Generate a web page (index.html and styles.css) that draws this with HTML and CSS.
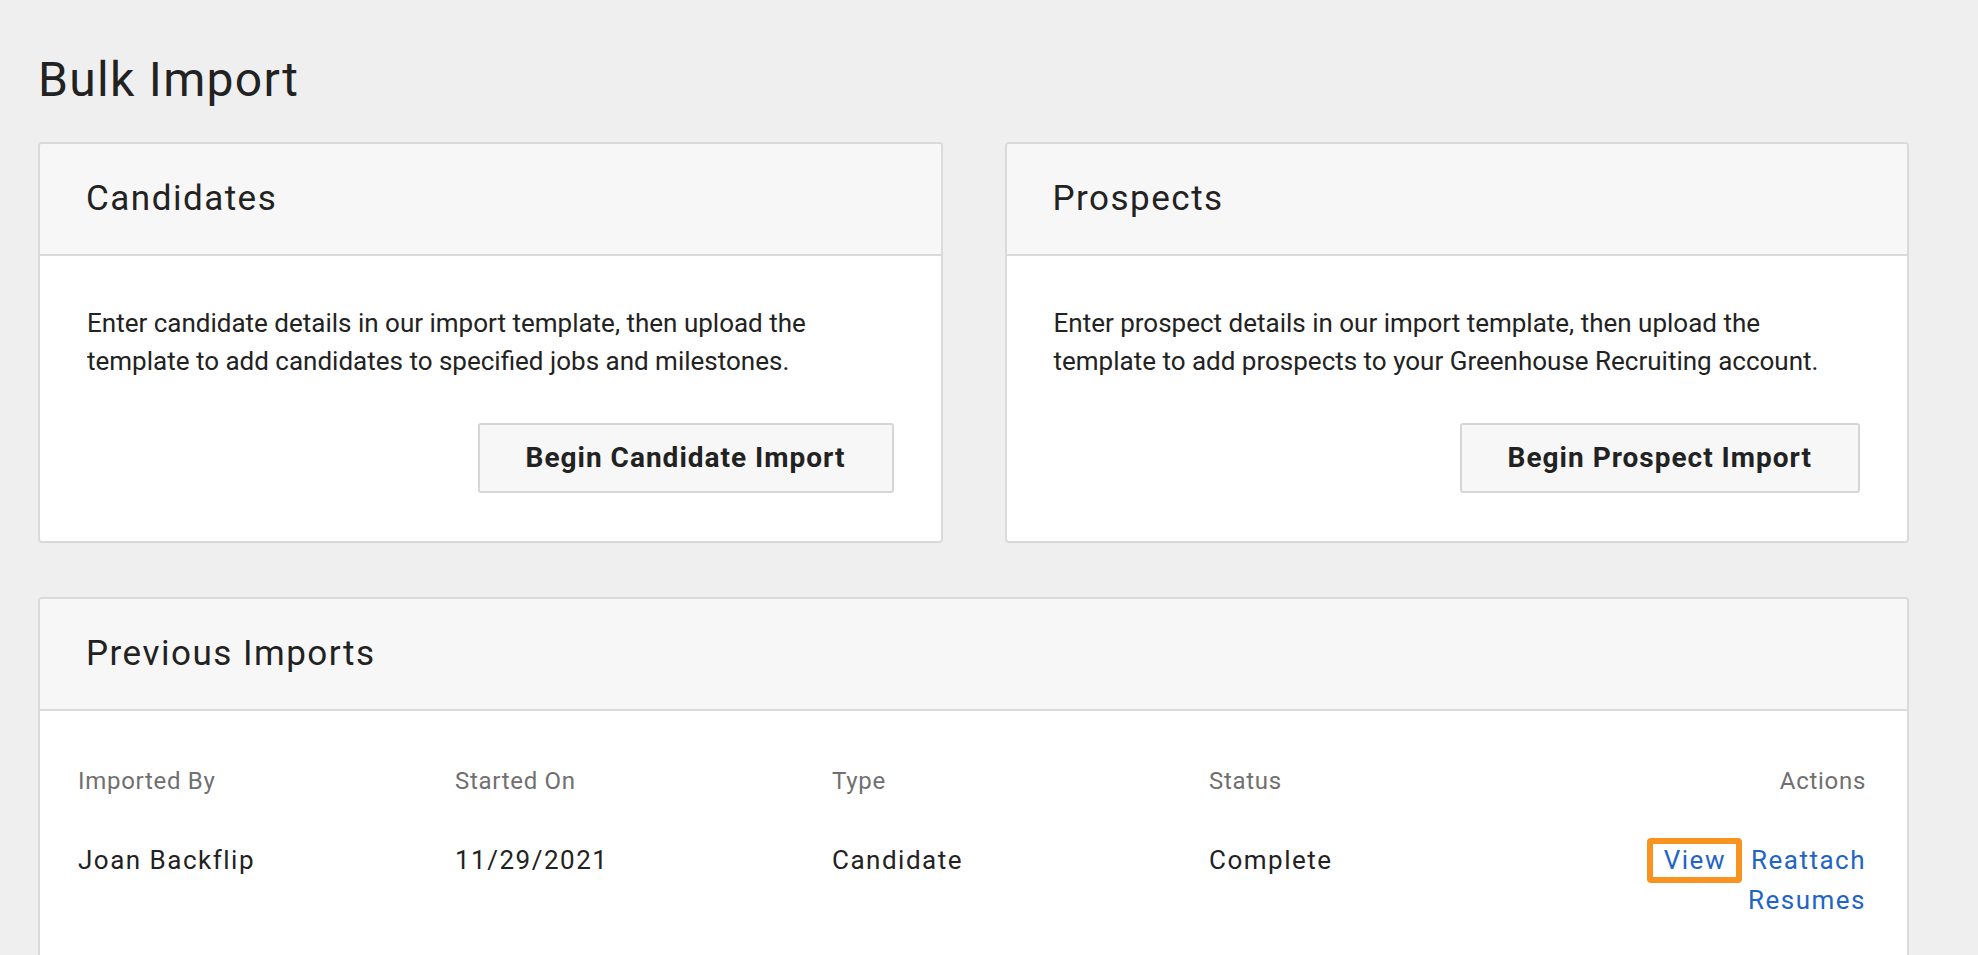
FILE: index.html
```html
<!DOCTYPE html>
<html lang="en">
<head>
<meta charset="utf-8">
<title>Bulk Import</title>
<link rel="stylesheet" href="styles.css">
</head>
<body>
<main class="page">
  <h1 class="page-title">Bulk Import</h1>
  <div class="import-grid">
    <section class="card">
      <header class="card-header"><h2 class="card-title">Candidates</h2></header>
      <div class="card-body">
        <p class="card-text">Enter candidate details in our import template, then upload the template to add candidates to specified jobs and milestones.</p>
        <div class="card-actions"><button class="btn">Begin Candidate Import</button></div>
      </div>
    </section>
    <section class="card">
      <header class="card-header"><h2 class="card-title">Prospects</h2></header>
      <div class="card-body">
        <p class="card-text">Enter prospect details in our import template, then upload the template to add prospects to your Greenhouse Recruiting account.</p>
        <div class="card-actions"><button class="btn">Begin Prospect Import</button></div>
      </div>
    </section>
  </div>
  <section class="card card-wide">
    <header class="card-header"><h2 class="card-title">Previous Imports</h2></header>
    <div class="card-body table-body">
      <div class="table">
        <div class="th">Imported By</div>
        <div class="th">Started On</div>
        <div class="th">Type</div>
        <div class="th">Status</div>
        <div class="th th-right">Actions</div>
        <div class="td">Joan Backflip</div>
        <div class="td">11/29/2021</div>
        <div class="td">Candidate</div>
        <div class="td">Complete</div>
        <div class="td td-actions">
          <a class="link link-highlight" href="#">View</a>
          <a class="link link-wrap" href="#">Reattach Resumes</a>
        </div>
      </div>
    </div>
  </section>
</main>
</body>
</html>
```
FILE: styles.css
```css
* { box-sizing: border-box; }
html, body { margin: 0; padding: 0; }
body {
  background: #efefef;
  color: #222222;
  font-family: Roboto, "Liberation Sans", Arial, sans-serif;
  height: 955px;
  overflow: hidden;
}
.page {
  width: 1909px;
  padding-left: 38px;
}
.page-title {
  margin: 0;
  padding-top: 51px;
  font-size: 48px;
  font-weight: 400;
  line-height: 57.6px;
  letter-spacing: 1.3px;
  margin-bottom: 33px;
}
.import-grid {
  display: grid;
  grid-template-columns: 1fr 1fr;
  column-gap: 62px;
}
.card {
  background: #ffffff;
  border: 2px solid #dadada;
  border-radius: 4px;
  overflow: hidden;
}
.card-header {
  background: #f7f7f7;
  border-bottom: 2px solid #dadada;
  height: 112px;
  padding: 0 46px;
  display: flex;
  align-items: center;
}
.card-title {
  margin: 0;
  font-size: 35px;
  font-weight: 400;
  line-height: 42px;
  letter-spacing: 1.5px;
}
.card-body {
  padding: 48px 47px 48px 47px;
}
.card-text {
  margin: 0;
  font-size: 26px;
  line-height: 38px;
}
.card-actions {
  display: flex;
  justify-content: flex-end;
  margin-top: 43px;
}
.btn {
  font-family: inherit;
  font-size: 28px;
  font-weight: 700;
  letter-spacing: 1px;
  color: #222222;
  background: #f7f7f7;
  border: 2px solid #d6d6d6;
  border-radius: 3px;
  height: 70px;
  padding: 0 46px;
}
.card-wide {
  margin-top: 54px;
  height: 400px;
}
.table-body {
  padding: 53px 41px 0 38px;
}
.table {
  display: grid;
  grid-template-columns: 377px 377px 377px 377px 1fr;
  row-gap: 43px;
}
.th {
  font-size: 24px;
  line-height: 34px;
  letter-spacing: 0.7px;
  color: #707070;
}
.th-right { text-align: right; }
.td {
  font-size: 26px;
  line-height: 38px;
  letter-spacing: 1.5px;
}
.td-actions {
  display: flex;
  justify-content: flex-end;
  align-items: flex-start;
  column-gap: 22px;
  line-height: 40px;
  margin-top: -1px;
}
.link {
  color: #1f64c7;
  text-decoration: none;
}
.link-wrap {
  text-align: right;
  width: min-content;
}
.link-highlight {
  position: relative;
}
.link-highlight::after {
  content: "";
  position: absolute;
  top: -2px;
  bottom: -3px;
  left: -17px;
  right: -16px;
  border: 6px solid #f7931e;
  border-radius: 4px;
}
```
